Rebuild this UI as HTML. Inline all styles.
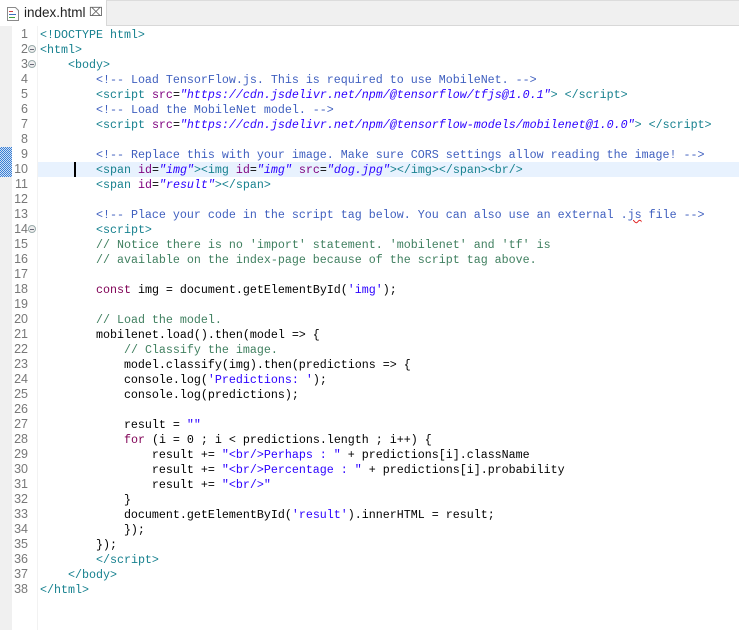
<!DOCTYPE html>
<html><head><style>
body{margin:0;width:739px;height:630px;background:#fff;position:relative;overflow:hidden;font-family:"Liberation Sans",sans-serif}
.tabbar{position:absolute;left:0;top:0;width:739px;height:26px;background:#f0f0f0;border-top:1px solid #dcdcdc;border-bottom:1px solid #d8d8d8;box-sizing:border-box}
.tab{position:absolute;left:0;top:0;width:107px;height:26px;background:#fff;border-right:1px solid #d8d8d8;box-sizing:border-box;font-size:13.5px;color:#222}
.gut{position:absolute;left:0;top:26px;width:12px;height:604px;background:#f0f0f0}
.sep{position:absolute;left:37px;top:26px;width:1px;height:604px;background:#f2f2f2}
.mark{position:absolute;left:0;top:147px;width:12px;height:30px;background:repeating-conic-gradient(#3b7fd4 0 25%,#cfe0f5 0 50%) 0 0/2px 2px}
.hl{position:absolute;left:38px;top:162px;width:701px;height:15px;background:#e8f2fe}
.caret{position:absolute;left:74px;top:162px;width:2px;height:15px;background:#000}
.ln{position:absolute;left:8px;width:20px;text-align:right;font:12.5px/15px "Liberation Sans",sans-serif;color:#787878}
.fold{position:absolute;left:28px;width:8px;height:8px;border:1px solid #9aa;border-radius:50%;box-sizing:border-box;background:#eee}
.fold:after{content:"";position:absolute;left:1px;top:3px;width:4px;height:1px;background:#667}
pre{position:absolute;left:40px;top:28px;margin:0;font:11.67px/15px "Liberation Mono",monospace;color:#000}
.t{color:#17818f}.a{color:#7f007f}.v{color:#2a00ff;font-style:italic}.c{color:#3f5fbf}.j{color:#3f7f5f}.k{color:#7f0055}.s{color:#2a00ff}
.sq{text-decoration:underline wavy #e02020;text-decoration-thickness:1px}
</style></head><body>
<div class="tabbar"></div>
<div class="tab"><svg style="position:absolute;left:7px;top:7px" width="12" height="14" viewBox="0 0 12 14"><path d="M0.5 0.5h8l3 3v10h-11z" fill="#fff" stroke="#8a8a8a"/><rect x="2" y="4" width="4" height="1" fill="#d04040"/><rect x="2" y="7" width="7" height="1" fill="#4070c0"/><rect x="2" y="10" width="6" height="1" fill="#40a040"/></svg><span style="position:absolute;left:24px;top:5px">index.html</span><span style="position:absolute;left:89px;top:5px;font-size:12px;color:#666">&#x2327;</span></div>
<div class="gut"></div><div class="sep"></div><div class="mark"></div><div class="hl"></div><div class="caret"></div>
<pre><span class="t">&lt;!DOCTYPE html&gt;</span>
<span class="t">&lt;html&gt;</span>
    <span class="t">&lt;body&gt;</span>
        <span class="c">&lt;!-- Load TensorFlow.js. This is required to use MobileNet. --&gt;</span>
        <span class="t">&lt;script </span><span class="a">src</span>=<span class="v">"https://cdn.jsdelivr.net/npm/@tensorflow/tfjs@1.0.1"</span><span class="t">&gt; &lt;/script&gt;</span>
        <span class="c">&lt;!-- Load the MobileNet model. --&gt;</span>
        <span class="t">&lt;script </span><span class="a">src</span>=<span class="v">"https://cdn.jsdelivr.net/npm/@tensorflow-models/mobilenet@1.0.0"</span><span class="t">&gt; &lt;/script&gt;</span>

        <span class="c">&lt;!-- Replace this with your image. Make sure CORS settings allow reading the image! --&gt;</span>
        <span class="t">&lt;span </span><span class="a">id</span>=<span class="v">"img"</span><span class="t">&gt;&lt;img </span><span class="a">id</span>=<span class="v">"img"</span> <span class="a">src</span>=<span class="v">"dog.jpg"</span><span class="t">&gt;&lt;/img&gt;&lt;/span&gt;&lt;br/&gt;</span>
        <span class="t">&lt;span </span><span class="a">id</span>=<span class="v">"result"</span><span class="t">&gt;&lt;/span&gt;</span>

        <span class="c">&lt;!-- Place your code in the script tag below. You can also use an external .<span class="sq">js</span> file --&gt;</span>
        <span class="t">&lt;script&gt;</span>
        <span class="j">// Notice there is no 'import' statement. 'mobilenet' and 'tf' is</span>
        <span class="j">// available on the index-page because of the script tag above.</span>

        <span class="k">const</span> img = document.getElementById(<span class="s">'img'</span>);

        <span class="j">// Load the model.</span>
        mobilenet.load().then(model =&gt; {
            <span class="j">// Classify the image.</span>
            model.classify(img).then(predictions =&gt; {
            console.log(<span class="s">'Predictions: '</span>);
            console.log(predictions);

            result = <span class="s">""</span>
            <span class="k">for</span> (i = 0 ; i &lt; predictions.length ; i++) {
                result += <span class="s">"&lt;br/&gt;Perhaps : "</span> + predictions[i].className
                result += <span class="s">"&lt;br/&gt;Percentage : "</span> + predictions[i].probability
                result += <span class="s">"&lt;br/&gt;"</span>
            }
            document.getElementById(<span class="s">'result'</span>).innerHTML = result;
            });
        });
        <span class="t">&lt;/script&gt;</span>
    <span class="t">&lt;/body&gt;</span>
<span class="t">&lt;/html&gt;</span></pre>
<div class="ln" style="top:27px">1</div><div class="ln" style="top:42px">2</div><div class="ln" style="top:57px">3</div><div class="ln" style="top:72px">4</div><div class="ln" style="top:87px">5</div><div class="ln" style="top:102px">6</div><div class="ln" style="top:117px">7</div><div class="ln" style="top:132px">8</div><div class="ln" style="top:147px">9</div><div class="ln" style="top:162px">10</div><div class="ln" style="top:177px">11</div><div class="ln" style="top:192px">12</div><div class="ln" style="top:207px">13</div><div class="ln" style="top:222px">14</div><div class="ln" style="top:237px">15</div><div class="ln" style="top:252px">16</div><div class="ln" style="top:267px">17</div><div class="ln" style="top:282px">18</div><div class="ln" style="top:297px">19</div><div class="ln" style="top:312px">20</div><div class="ln" style="top:327px">21</div><div class="ln" style="top:342px">22</div><div class="ln" style="top:357px">23</div><div class="ln" style="top:372px">24</div><div class="ln" style="top:387px">25</div><div class="ln" style="top:402px">26</div><div class="ln" style="top:417px">27</div><div class="ln" style="top:432px">28</div><div class="ln" style="top:447px">29</div><div class="ln" style="top:462px">30</div><div class="ln" style="top:477px">31</div><div class="ln" style="top:492px">32</div><div class="ln" style="top:507px">33</div><div class="ln" style="top:522px">34</div><div class="ln" style="top:537px">35</div><div class="ln" style="top:552px">36</div><div class="ln" style="top:567px">37</div><div class="ln" style="top:582px">38</div>
<div class="fold" style="top:45px"></div><div class="fold" style="top:60px"></div><div class="fold" style="top:225px"></div>
</body></html>
